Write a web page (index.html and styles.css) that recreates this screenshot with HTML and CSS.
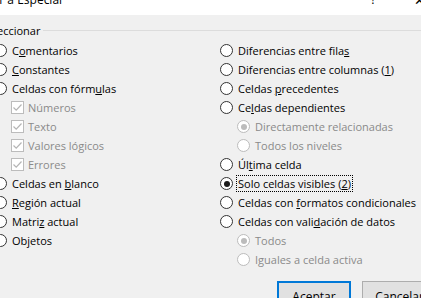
FILE: index.html
```html
<!DOCTYPE html>
<html lang="es">
<head>
<meta charset="utf-8">
<link rel="stylesheet" href="styles.css">
</head>
<body>
<div class="window">
  <div class="titlebar">
    <span class="title">Ir a Especial</span>
    <span class="help">?</span>
    <span class="close">✕</span>
  </div>
  <div class="content">
    <div class="group-head">
      <span class="legend">Seleccionar</span>
      <span class="rule"></span>
    </div>
    <div class="cols">
      <div class="col">
        <div class="row"><span class="radio"></span><span>C<u>o</u>mentarios</span></div>
        <div class="row"><span class="radio"></span><span><u>C</u>onstantes</span></div>
        <div class="row"><span class="radio"></span><span>Celdas con fórm<u>u</u>las</span></div>
        <div class="row sub dis"><span class="check"><svg viewBox="0 0 13 13" width="13" height="13"><path d="M2.5 6.5 L5.2 9.2 L10.5 3.5" fill="none" stroke="#b5b5b5" stroke-width="1.2"/></svg></span><span>Números</span></div>
        <div class="row sub dis"><span class="check"><svg viewBox="0 0 13 13" width="13" height="13"><path d="M2.5 6.5 L5.2 9.2 L10.5 3.5" fill="none" stroke="#b5b5b5" stroke-width="1.2"/></svg></span><span>Texto</span></div>
        <div class="row sub dis"><span class="check"><svg viewBox="0 0 13 13" width="13" height="13"><path d="M2.5 6.5 L5.2 9.2 L10.5 3.5" fill="none" stroke="#b5b5b5" stroke-width="1.2"/></svg></span><span>Valores lógicos</span></div>
        <div class="row sub dis"><span class="check"><svg viewBox="0 0 13 13" width="13" height="13"><path d="M2.5 6.5 L5.2 9.2 L10.5 3.5" fill="none" stroke="#b5b5b5" stroke-width="1.2"/></svg></span><span>Errores</span></div>
        <div class="row"><span class="radio"></span><span>Celdas en <u>b</u>lanco</span></div>
        <div class="row"><span class="radio"></span><span><u>R</u>egión actual</span></div>
        <div class="row"><span class="radio"></span><span>Matri<u>z</u> actual</span></div>
        <div class="row"><span class="radio"></span><span>Ob<u>j</u>etos</span></div>
      </div>
      <div class="col">
        <div class="row"><span class="radio"></span><span>Diferencias entre fila<u>s</u></span></div>
        <div class="row"><span class="radio"></span><span>Diferencias entre columnas (<u>1</u>)</span></div>
        <div class="row"><span class="radio"></span><span>Celdas <u>p</u>recedentes</span></div>
        <div class="row"><span class="radio"></span><span>Ce<u>l</u>das dependientes</span></div>
        <div class="row sub dis"><span class="radio on"></span><span>Directamente relacionadas</span></div>
        <div class="row sub dis"><span class="radio"></span><span>Todos los niveles</span></div>
        <div class="row"><span class="radio"></span><span>Úl<u>t</u>ima celda</span></div>
        <div class="row"><span class="radio on"></span><span class="focus">Solo celdas visibles (<u>2</u>)</span></div>
        <div class="row"><span class="radio"></span><span>Celdas con <u>f</u>ormatos condicionales</span></div>
        <div class="row"><span class="radio"></span><span>Celdas con vali<u>d</u>ación de datos</span></div>
        <div class="row sub dis"><span class="radio on"></span><span>Todos</span></div>
        <div class="row sub dis"><span class="radio"></span><span>Iguales a celda activa</span></div>
      </div>
    </div>
    <div class="buttons">
      <button class="btn primary">Aceptar</button>
      <button class="btn">Cancelar</button>
    </div>
  </div>
</div>
</body>
</html>
```
FILE: styles.css
```css
html, body {
  margin: 0;
  padding: 0;
}
body {
  width: 421px;
  height: 298px;
  overflow: hidden;
  background: #f0f0f0;
  font-family: "Open Sans", "Noto Sans", sans-serif;
  font-size: 11px;
  color: #000;
}
.window {
  width: 421px;
  height: 298px;
  overflow: hidden;
}
.titlebar {
  height: 15px;
  background: #fff;
  display: flex;
  align-items: flex-end;
  overflow: hidden;
  position: relative;
}
.title {
  font-size: 12px;
  line-height: 16px;
  margin-left: -4px;
  margin-bottom: 7px;
  white-space: nowrap;
}
.help {
  font-size: 12px;
  line-height: 16px;
  margin-left: auto;
  margin-right: 38px;
  margin-bottom: 7px;
}
.close {
  font-size: 13px;
  line-height: 16px;
  margin-right: -4px;
  margin-bottom: 7px;
}
.content {
  padding-top: 7px;
}
.group-head {
  display: flex;
  align-items: center;
  height: 16px;
  margin-left: -18px;
}
.legend {
  white-space: nowrap;
  padding-right: 3px;
}
.rule {
  flex: 1;
  height: 1px;
  background: #dcdcdc;
}
.cols {
  display: grid;
  grid-template-columns: 226px 1fr;
  margin-left: -6px;
  margin-top: 3px;
}
.col {
  display: flex;
  flex-direction: column;
}
.row {
  height: 19px;
  display: flex;
  align-items: center;
  white-space: nowrap;
}
.row.sub {
  padding-left: 17px;
}
.dis {
  color: #8a8a8a;
}
.radio {
  width: 11px;
  height: 11px;
  border: 1px solid #333;
  border-radius: 50%;
  background: #fff;
  margin-right: 5px;
  flex: none;
  position: relative;
}
.radio.on::after {
  content: "";
  position: absolute;
  left: 2.5px;
  top: 2.5px;
  width: 6px;
  height: 6px;
  border-radius: 50%;
  background: #1a1a1a;
}
.dis .radio {
  border-color: #bcbcbc;
}
.dis .radio.on::after {
  background: #bcbcbc;
}
.check {
  width: 11px;
  height: 11px;
  border: 1px solid #bcbcbc;
  background: #fff;
  margin-right: 4px;
  flex: none;
  position: relative;
}
.check svg {
  position: absolute;
  left: -1px;
  top: -1px;
}
.focus {
  outline: 1px dotted #000;
  outline-offset: 0;
  padding: 0 1px;
  margin-left: -1px;
}
.buttons {
  display: flex;
  align-items: flex-start;
  margin-top: 12px;
  margin-left: 277px;
  gap: 11px;
}
.btn {
  font-family: inherit;
  font-size: 12px;
  height: 27px;
  width: 75px;
  background: #e1e1e1;
  border: 1px solid #adadad;
  padding: 3px 0 0;
  flex: none;
}
.btn.primary {
  width: 74px;
  border: 2px solid #0078d7;
}
```
